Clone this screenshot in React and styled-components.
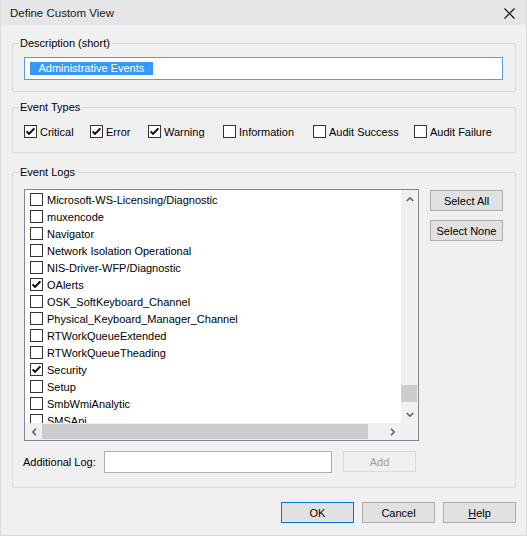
import React from "react";
import styled, { createGlobalStyle } from "styled-components";

const GlobalStyle = createGlobalStyle`
  html, body {
    margin: 0;
    padding: 0;
    background: #f0f0f0;
  }
  * {
    box-sizing: border-box;
  }
`;

const FONT = `"Liberation Sans", Arial, sans-serif`;

const eventTypes = [
  { label: "Critical", checked: true, width: 66 },
  { label: "Error", checked: true, width: 58 },
  { label: "Warning", checked: true, width: 75 },
  { label: "Information", checked: false, width: 90 },
  { label: "Audit Success", checked: false, width: 101 },
  { label: "Audit Failure", checked: false, width: 90 },
];

const logs = [
  { name: "Microsoft-WS-Licensing/Diagnostic" },
  { name: "muxencode" },
  { name: "Navigator" },
  { name: "Network Isolation Operational" },
  { name: "NIS-Driver-WFP/Diagnostic" },
  { name: "OAlerts", checked: true },
  { name: "OSK_SoftKeyboard_Channel" },
  { name: "Physical_Keyboard_Manager_Channel" },
  { name: "RTWorkQueueExtended" },
  { name: "RTWorkQueueTheading" },
  { name: "Security", checked: true },
  { name: "Setup" },
  { name: "SmbWmiAnalytic" },
  { name: "SMSApi" },
];

const Window = styled.div`
  width: 527px;
  height: 536px;
  display: flex;
  flex-direction: column;
  background: #f0f0f0;
  border: 1px solid #dadada;
  border-top: none;
  font-family: ${FONT};
  font-size: 11px;
  color: #000;
  overflow: hidden;
`;

const TitleBar = styled.div`
  height: 25px;
  flex: none;
  display: flex;
  align-items: center;
  justify-content: space-between;
  padding: 1px 11px 0 9px;
  background: #e6e6e6;
`;

const Title = styled.span`
  font-size: 11.5px;
  color: #1a1a1a;
`;

const CloseIcon = styled.svg`
  width: 11px;
  height: 11px;
  display: block;
`;

const Body = styled.div`
  flex: 1;
  display: flex;
  flex-direction: column;
  padding: 11px 10px 0 11px;
`;

const Group = styled.fieldset`
  margin: ${(p) => p.$top || 0}px 0 0 0;
  min-width: 0;
  border: 1px solid #dcdcdc;
  padding: ${(p) => p.$pad};
`;

const Legend = styled.legend`
  margin-left: -5px;
  padding: 0 1px;
  line-height: 14px;
  font-size: 11px;
`;

const TextInput = styled.div`
  height: ${(p) => p.$h || 23}px;
  width: ${(p) => (p.$w ? `${p.$w}px` : "100%")};
  background: #fff;
  border: 1px solid ${(p) => (p.$focus ? "#569de5" : "#abadb3")};
  display: flex;
  align-items: center;
  padding-left: 5px;
`;

const Selection = styled.span`
  background: #3399ff;
  color: #fff;
  line-height: 13px;
  padding: 0 6px;
  white-space: pre;
`;

const TypeRow = styled.div`
  display: flex;
  height: 17px;
  align-items: center;
`;

const TypeItem = styled.label`
  width: ${(p) => p.$w}px;
  flex: none;
  display: flex;
  align-items: center;
  gap: 3px;
  white-space: nowrap;
`;

const Box = styled.span`
  width: 13px;
  height: 13px;
  flex: none;
  border: 1px solid #333;
  background: #fff;
  display: flex;
  align-items: center;
  justify-content: center;
`;

const LogsTop = styled.div`
  display: grid;
  grid-template-columns: 395px 73px;
  column-gap: 11px;
  align-items: start;
`;

const ListBox = styled.div`
  height: 252px;
  border: 1px solid #828790;
  background: #fff;
  display: grid;
  grid-template-columns: 1fr 17px;
  grid-template-rows: 1fr 17px;
  overflow: hidden;
`;

const Items = styled.div`
  overflow: hidden;
  padding-top: 1px;
`;

const Item = styled.div`
  height: 17px;
  display: flex;
  align-items: center;
  gap: 4px;
  padding-left: 5px;
  white-space: nowrap;
`;

const VScroll = styled.div`
  background: #f0f0f0;
  display: flex;
  flex-direction: column;
`;

const HScroll = styled.div`
  background: #f0f0f0;
  display: flex;
`;

const Corner = styled.div`
  background: #f0f0f0;
`;

const Arrow = styled.div`
  width: 17px;
  height: 17px;
  flex: none;
  display: flex;
  align-items: center;
  justify-content: center;
`;

const VTrack = styled.div`
  flex: 1;
  display: flex;
  flex-direction: column;
  justify-content: flex-end;
  padding-bottom: 4px;
`;

const VThumb = styled.div`
  height: 17px;
  width: 16px;
  background: #cdcdcd;
`;

const HTrack = styled.div`
  flex: 1;
  display: flex;
`;

const HThumb = styled.div`
  height: 15px;
  margin-top: 1px;
  background: #cdcdcd;
`;

const SideButtons = styled.div`
  display: flex;
  flex-direction: column;
  gap: 9px;
  padding-top: 1px;
`;

const Button = styled.div`
  width: 73px;
  height: 21px;
  display: flex;
  align-items: center;
  justify-content: center;
  background: ${(p) => (p.$disabled ? "#efefef" : "#e1e1e1")};
  border: 1px solid
    ${(p) => (p.$primary ? "#0078d7" : p.$disabled ? "#d9d9d9" : "#adadad")};
  color: ${(p) => (p.$disabled ? "#a0a0a0" : "#000")};
  font-size: 11px;
  white-space: nowrap;
`;

const AddRow = styled.div`
  display: flex;
  align-items: flex-start;
  margin-top: 10px;
`;

const AddLabel = styled.span`
  width: 81px;
  line-height: 22px;
  margin-left: -1px;
  padding-right: 1px;
  flex: none;
`;

const AddButtonWrap = styled.div`
  margin-left: 11px;
`;

const Footer = styled.div`
  display: flex;
  justify-content: flex-end;
  gap: 8px;
  padding-top: 14px;
`;

function Check() {
  return (
    <svg width="11" height="11" viewBox="0 0 11 11">
      <path
        d="M1.6 5.4 L4 7.9 L9.4 2.3"
        fill="none"
        stroke="#000"
        strokeWidth="1.9"
      />
    </svg>
  );
}

function CheckBox({ checked }) {
  return <Box>{checked && <Check />}</Box>;
}

function Chevron({ dir }) {
  const rot = { up: 0, down: 180, left: 270, right: 90 }[dir];
  return (
    <svg width="8" height="8" viewBox="0 0 8 8" style={{ transform: `rotate(${rot}deg)` }}>
      <path d="M0.8 6 L4 2.8 L7.2 6" fill="none" stroke="#606060" strokeWidth="1.6" />
    </svg>
  );
}

export default function App() {
  return (
    <>
      <GlobalStyle />
      <Window>
        <TitleBar>
          <Title>Define Custom View</Title>
          <CloseIcon viewBox="0 0 11 11">
            <path d="M0.5 0.5 L10.5 10.5 M10.5 0.5 L0.5 10.5" stroke="#000" strokeWidth="1.1" />
          </CloseIcon>
        </TitleBar>
        <Body>
          <Group $pad="7px 12px 11px 11px">
            <Legend>Description (short)</Legend>
            <TextInput $focus>
              <Selection> Administrative Events </Selection>
            </TextInput>
          </Group>

          <Group $top={8} $pad="9px 11px 12px 11px">
            <Legend>Event Types</Legend>
            <TypeRow>
              {eventTypes.map((t) => (
                <TypeItem key={t.label} $w={t.width}>
                  <CheckBox checked={t.checked} />
                  {t.label}
                </TypeItem>
              ))}
            </TypeRow>
          </Group>

          <Group $top={12} $pad="10px 12px 14px 11px">
            <Legend>Event Logs</Legend>
            <LogsTop>
              <ListBox>
                <Items>
                  {logs.map((l) => (
                    <Item key={l.name}>
                      <CheckBox checked={l.checked} />
                      {l.name}
                    </Item>
                  ))}
                </Items>
                <VScroll>
                  <Arrow>
                    <Chevron dir="up" />
                  </Arrow>
                  <VTrack>
                    <VThumb />
                  </VTrack>
                  <Arrow>
                    <Chevron dir="down" />
                  </Arrow>
                </VScroll>
                <HScroll>
                  <Arrow>
                    <Chevron dir="left" />
                  </Arrow>
                  <HTrack>
                    <HThumb style={{ width: 326 }} />
                  </HTrack>
                  <Arrow>
                    <Chevron dir="right" />
                  </Arrow>
                </HScroll>
                <Corner />
              </ListBox>
              <SideButtons>
                <Button>Select All</Button>
                <Button>Select None</Button>
              </SideButtons>
            </LogsTop>
            <AddRow>
              <AddLabel>Additional Log:</AddLabel>
              <TextInput $w={228} $h={22} />
              <AddButtonWrap>
                <Button $disabled>Add</Button>
              </AddButtonWrap>
            </AddRow>
          </Group>

          <Footer>
            <Button $primary>OK</Button>
            <Button>Cancel</Button>
            <Button>
              <span>
                <u>H</u>elp
              </span>
            </Button>
          </Footer>
        </Body>
      </Window>
    </>
  );
}
